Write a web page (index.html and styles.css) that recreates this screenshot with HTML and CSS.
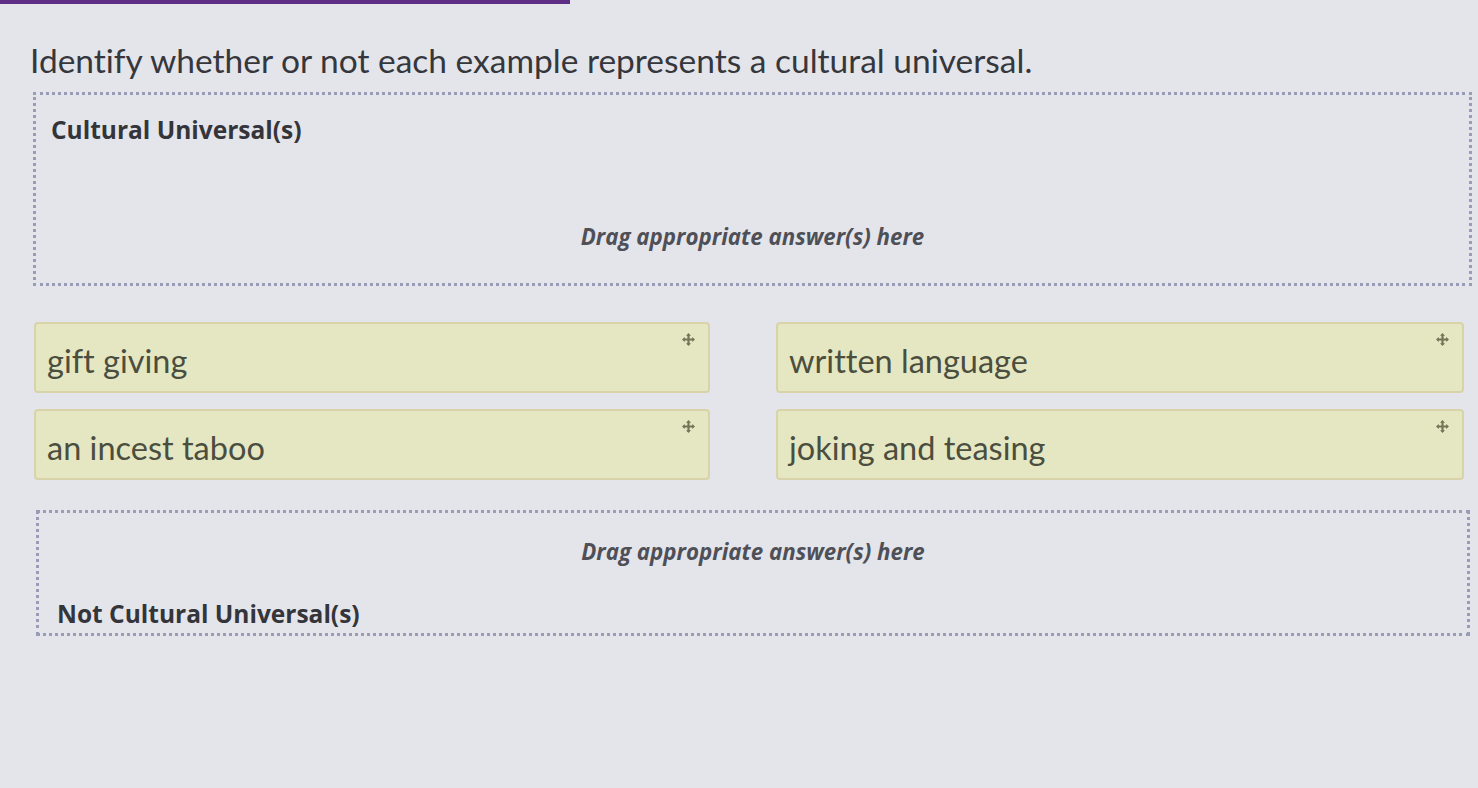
FILE: index.html
```html
<!DOCTYPE html>
<html lang="en">
<head>
<meta charset="utf-8">
<title>Cultural universals</title>
<link rel="stylesheet" href="styles.css">
</head>
<body>
<div class="topbar"></div>
<main class="page">
  <h1 class="prompt">Identify whether or not each example represents a cultural universal.</h1>

  <section class="dropzone dz-top">
    <div class="dz-label">Cultural Universal(s)</div>
    <div class="dz-hint">Drag appropriate answer(s) here</div>
  </section>

  <div class="choices">
    <div class="choice"><span class="choice-text">gift giving</span>
      <svg class="move" viewBox="0 0 12 12" width="13" height="13"><path d="M6 1.5v9M1.5 6h9" /><path class="head" d="M6 0l-2.3 2.6h4.6zM6 12l-2.3-2.6h4.6zM0 6l2.6-2.3v4.6zM12 6l-2.6-2.3v4.6z"/></svg>
    </div>
    <div class="choice"><span class="choice-text">written language</span>
      <svg class="move" viewBox="0 0 12 12" width="13" height="13"><path d="M6 1.5v9M1.5 6h9" /><path class="head" d="M6 0l-2.3 2.6h4.6zM6 12l-2.3-2.6h4.6zM0 6l2.6-2.3v4.6zM12 6l-2.6-2.3v4.6z"/></svg>
    </div>
    <div class="choice"><span class="choice-text">an incest taboo</span>
      <svg class="move" viewBox="0 0 12 12" width="13" height="13"><path d="M6 1.5v9M1.5 6h9" /><path class="head" d="M6 0l-2.3 2.6h4.6zM6 12l-2.3-2.6h4.6zM0 6l2.6-2.3v4.6zM12 6l-2.6-2.3v4.6z"/></svg>
    </div>
    <div class="choice"><span class="choice-text">joking and teasing</span>
      <svg class="move" viewBox="0 0 12 12" width="13" height="13"><path d="M6 1.5v9M1.5 6h9" /><path class="head" d="M6 0l-2.3 2.6h4.6zM6 12l-2.3-2.6h4.6zM0 6l2.6-2.3v4.6zM12 6l-2.6-2.3v4.6z"/></svg>
    </div>
  </div>

  <section class="dropzone dz-bottom">
    <div class="dz-hint">Drag appropriate answer(s) here</div>
    <div class="dz-label">Not Cultural Universal(s)</div>
  </section>
</main>
</body>
</html>
```

FILE: styles.css
```css
html, body {
  margin: 0;
  padding: 0;
}
body {
  background: #e4e5eb;
  font-family: Lato, "Open Sans", "Liberation Sans", sans-serif;
  color: #3c3d42;
  width: 1478px;
  height: 788px;
  overflow: hidden;
  font-variant-ligatures: none;
}
.topbar {
  width: 570px;
  height: 4px;
  background: #5e2d86;
}
.page {
  padding: 0 6px 0 33px;
}
.prompt {
  margin: 36px 0 12px -3px;
  font-size: 33.5px;
  line-height: 40px;
  font-weight: 400;
  color: #36373c;
}
.dropzone {
  border: 3px dotted #989cb6;
  box-sizing: border-box;
  display: flex;
  flex-direction: column;
}
.dz-top {
  height: 194px;
  padding: 20px 15px 0;
}
.dz-label {
  font-family: "Open Sans", Lato, sans-serif;
  font-weight: 700;
  font-size: 24.5px;
  line-height: 30px;
  color: #34353a;
}
.dz-hint {
  font-family: "Open Sans", Lato, sans-serif;
  font-style: italic;
  font-weight: 700;
  font-size: 22.3px;
  line-height: 28px;
  color: #4f5057;
  text-align: center;
}
.dz-top .dz-hint {
  margin-top: 78px;
}
.choices {
  display: grid;
  grid-template-columns: 676px 688px;
  column-gap: 66px;
  row-gap: 16px;
  margin: 36px 0 30px 1px;
}
.choice {
  height: 71px;
  box-sizing: border-box;
  background: #e5e7c2;
  border: 2px solid #d8d3a8;
  border-radius: 4px;
  position: relative;
  display: flex;
  align-items: center;
  padding: 6px 11px 0;
}
.choice-text {
  font-size: 32.5px;
  line-height: 40px;
  color: #4b4e3e;
}
.move {
  position: absolute;
  top: 9px;
  right: 13px;
  width: 13px;
  height: 13px;
}
.move path {
  stroke: #727558;
  stroke-width: 2;
  fill: none;
}
.move path.head {
  stroke: none;
  fill: #727558;
}
.dz-bottom {
  height: 126px;
  margin-left: 3px;
  margin-right: 2px;
  padding: 25px 18px 0;
}
.dz-bottom .dz-label {
  margin-top: 33px;
}
```
